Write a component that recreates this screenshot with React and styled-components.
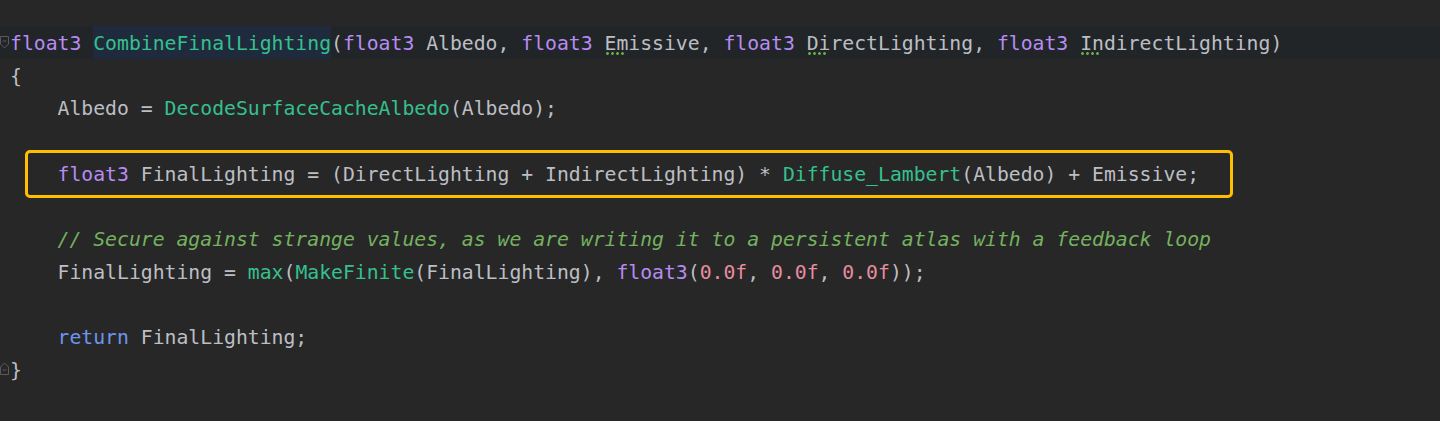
import React from "react";
import styled, { createGlobalStyle } from "styled-components";

const LH = 32.7;

const Global = createGlobalStyle`
  html, body { margin: 0; padding: 0; background: #272727; }
  body { overflow: hidden; }
`;

const Editor = styled.div`
  width: 1440px;
  height: 421px;
  box-sizing: border-box;
  padding-top: 26px;
  background: #272727;
  display: flex;
  flex-direction: column;
  font-family: "DejaVu Sans Mono", "Liberation Mono", monospace;
  font-size: 19.75px;
  color: #bcbec4;
`;

const Line = styled.div`
  position: relative;
  height: ${LH}px;
  line-height: ${LH}px;
  display: flex;
  align-items: stretch;
  background: ${(p) => (p.$current ? "#212528" : "transparent")};
  white-space: pre;
`;

const Gutter = styled.div`
  width: 10px;
  flex: none;
  display: flex;
  align-items: center;
  justify-content: flex-start;
`;

const Code = styled.div`
  flex: 1;
  box-sizing: border-box;
  padding-top: 2px;
`;

const colors = {
  kw: "#b78cf2",
  fn: "#35c08e",
  id: "#bcbec4",
  num: "#e88c9f",
  ret: "#6c95eb",
  cm: "#74b25f",
};

const Tok = styled.span`
  color: ${(p) => colors[p.$k] || colors.id};
  font-style: ${(p) => (p.$k === "cm" ? "italic" : "normal")};
`;

const Selected = styled.span`
  display: inline-block;
  line-height: ${LH}px;
  height: ${LH - 2}px;
  padding-top: 2px;
  margin-top: -2px;
  vertical-align: baseline;
  background: #1f2a3d;
  color: ${colors.fn};
`;

const Unused = styled.span`
  position: relative;
  &::after {
    content: "";
    position: absolute;
    left: 0;
    top: 19.5px;
    width: 20px;
    height: 3px;
    background-image: radial-gradient(circle, #6aab48 1.3px, transparent 1.5px);
    background-size: 5px 3px;
    background-repeat: repeat-x;
  }
`;

const Callout = styled.div`
  position: absolute;
  left: 25px;
  top: -7px;
  width: 1208px;
  height: 48px;
  box-sizing: border-box;
  border: 3px solid #ffbf00;
  border-radius: 5px;
  pointer-events: none;
`;

const FoldStart = () => (
  <svg width="9" height="14" viewBox="0 0 9 14">
    <path d="M0.5 1.5 H8.5 V9 L4.5 13 L0.5 9 Z" fill="none" stroke="#5a5a5a" strokeWidth="1" />
    <path d="M2.5 6 H6.5" stroke="#5a5a5a" strokeWidth="1" />
  </svg>
);

const FoldEnd = () => (
  <svg width="9" height="14" viewBox="0 0 9 14">
    <path d="M0.5 12.5 H8.5 V5 L4.5 1 L0.5 5 Z" fill="none" stroke="#5a5a5a" strokeWidth="1" />
    <path d="M2.5 8 H6.5" stroke="#5a5a5a" strokeWidth="1" />
  </svg>
);

const U = ({ children }) => (
  <>
    <Unused>{children[0]}</Unused>
    {children.slice(1)}
  </>
);

export default function App() {
  return (
    <>
      <Global />
      <Editor>
        <Line $current>
          <Gutter><FoldStart /></Gutter>
          <Code>
            <Tok $k="kw">float3</Tok> <Selected>CombineFinalLighting</Selected>(
            <Tok $k="kw">float3</Tok> Albedo, <Tok $k="kw">float3</Tok> <U>Emissive</U>,{" "}
            <Tok $k="kw">float3</Tok> <U>DirectLighting</U>, <Tok $k="kw">float3</Tok>{" "}
            <U>IndirectLighting</U>)
          </Code>
        </Line>
        <Line>
          <Gutter />
          <Code>{"{"}</Code>
        </Line>
        <Line>
          <Gutter />
          <Code>
            {"    Albedo = "}
            <Tok $k="fn">DecodeSurfaceCacheAlbedo</Tok>(Albedo);
          </Code>
        </Line>
        <Line>
          <Gutter />
          <Code />
        </Line>
        <Line>
          <Gutter />
          <Code>
            {"    "}
            <Tok $k="kw">float3</Tok>
            {" FinalLighting = (DirectLighting + IndirectLighting) * "}
            <Tok $k="fn">Diffuse_Lambert</Tok>
            {"(Albedo) + Emissive;"}
          </Code>
          <Callout />
        </Line>
        <Line>
          <Gutter />
          <Code />
        </Line>
        <Line>
          <Gutter />
          <Code>
            {"    "}
            <Tok $k="cm">
              // Secure against strange values, as we are writing it to a persistent atlas with a feedback loop
            </Tok>
          </Code>
        </Line>
        <Line>
          <Gutter />
          <Code>
            {"    FinalLighting = "}
            <Tok $k="fn">max</Tok>(<Tok $k="fn">MakeFinite</Tok>(FinalLighting),{" "}
            <Tok $k="kw">float3</Tok>(<Tok $k="num">0.0f</Tok>, <Tok $k="num">0.0f</Tok>,{" "}
            <Tok $k="num">0.0f</Tok>));
          </Code>
        </Line>
        <Line>
          <Gutter />
          <Code />
        </Line>
        <Line>
          <Gutter />
          <Code>
            {"    "}
            <Tok $k="ret">return</Tok> FinalLighting;
          </Code>
        </Line>
        <Line>
          <Gutter><FoldEnd /></Gutter>
          <Code>{"}"}</Code>
        </Line>
      </Editor>
    </>
  );
}
